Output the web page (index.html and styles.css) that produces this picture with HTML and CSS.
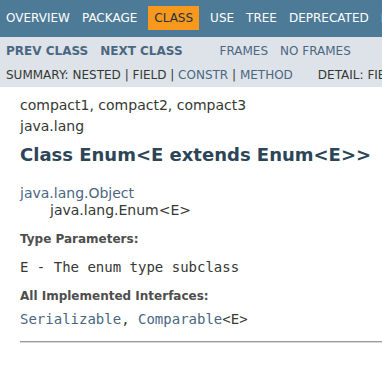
FILE: index.html
```html
<!DOCTYPE html>
<html lang="en">
<head>
  <meta charset="UTF-8">
  <title>Enum (Java Platform SE 8)</title>
  <link rel="stylesheet" href="styles.css">
</head>
<body>
  <div class="topNav">
    <ul class="navList">
      <li><a href="#">Overview</a></li>
      <li><a href="#">Package</a></li>
      <li class="navBarCell1Rev">Class</li>
      <li><a href="#">Use</a></li>
      <li><a href="#">Tree</a></li>
      <li><a href="#">Deprecated</a></li>
      <li><a href="#">Index</a></li>
      <li><a href="#">Help</a></li>
    </ul>
  </div>
  <div class="subNav">
    <div class="subRow">
      <ul class="navList">
        <li><a class="strong" href="#">Prev&nbsp;Class</a></li>
        <li><a class="strong" href="#">Next&nbsp;Class</a></li>
      </ul>
      <ul class="navList">
        <li><a href="#">Frames</a></li>
        <li><a href="#">No&nbsp;Frames</a></li>
      </ul>
    </div>
    <div class="subRow summaryRow">
      <ul class="subNavList">
        <li>Summary:&nbsp;</li>
        <li>Nested&nbsp;|&nbsp;</li>
        <li>Field&nbsp;|&nbsp;</li>
        <li><a href="#">Constr</a>&nbsp;|&nbsp;</li>
        <li><a href="#">Method</a></li>
      </ul>
      <ul class="subNavList">
        <li>Detail:&nbsp;</li>
        <li>Field&nbsp;|&nbsp;</li>
        <li><a href="#">Constr</a>&nbsp;|&nbsp;</li>
        <li><a href="#">Method</a></li>
      </ul>
    </div>
  </div>
  <div class="header">
    <div class="subTitle">compact1, compact2, compact3</div>
    <div class="subTitle">java.lang</div>
    <h2 class="title">Class Enum&lt;E extends Enum&lt;E&gt;&gt;</h2>
  </div>
  <div class="contentContainer">
    <ul class="inheritance">
      <li><a href="#">java.lang.Object</a></li>
      <li>
        <ul class="inheritance">
          <li>java.lang.Enum&lt;E&gt;</li>
        </ul>
      </li>
    </ul>
    <div class="description">
      <dl class="first">
        <dt>Type Parameters:</dt>
        <dd>E - The enum type subclass</dd>
      </dl>
      <dl class="second">
        <dt>All Implemented Interfaces:</dt>
        <dd><a href="#">Serializable</a>, <a href="#">Comparable</a>&lt;E&gt;</dd>
      </dl>
      <hr>
    </div>
  </div>
</body>
</html>
```

FILE: styles.css
```css
body{
  margin: 0;
  background-color: #ffffff;
  color: #353833;
  font-family: 'DejaVu Sans', Arial, Helvetica, sans-serif;
  font-size: 14px;
  overflow: hidden;
}
ul,li{
  list-style: none;
  margin: 0;
  padding: 0;
}
a{
  text-decoration: none;
  color: #4A6782;
}
.topNav{
  box-sizing: border-box;
  height: 37px;
  padding-top: 6px;
  background-color: #4D7A97;
  color: #ffffff;
  font-size: 12px;
  overflow: hidden;
  white-space: nowrap;
}
.topNav a{
  color: #ffffff;
}
.navList{
  display: flex;
  margin-right: 25px;
}
.navList li{
  padding: 5px 6px;
  text-transform: uppercase;
  line-height: 14px;
}
.topNav .navBarCell1Rev{
  margin: 0 5px;
  background-color: #F8981D;
  color: #253441;
}
.subNav{
  background-color: #dee3e9;
  font-size: 12px;
  padding: 2px 0 5px 0;
  white-space: nowrap;
  overflow: hidden;
}
.subRow{
  display: flex;
}
.strong{
  font-weight: bold;
}
.summaryRow{
  padding: 5px 0 0 6px;
  text-transform: uppercase;
  line-height: 14px;
}
.subNavList{
  display: flex;
  margin-right: 25px;
}
.header{
  margin: 0 20px;
  padding-top: 5px;
  white-space: nowrap;
}
.subTitle{
  margin-top: 5px;
}
.title{
  color: #2c4557;
  font-size: 18px;
  margin: 10px 0;
}
.contentContainer{
  padding: 10px 0 10px 20px;
}
.inheritance .inheritance{
  margin-left: 15px;
  padding-left: 15px;
  padding-top: 1px;
}
.description dl{
  margin: 14px 0;
}
.description dt{
  font-size: 12px;
  font-weight: bold;
  color: #4E4E4E;
  margin: 10px 0 0 0;
}
.description dd{
  margin: 5px 0 10px 0;
  font-family: 'DejaVu Sans Mono', monospace;
  font-size: 14px;
}
.description dl.first dd{
  margin-top: 13px;
}
.description dl.second dd{
  margin-top: 8px;
}
hr{
  margin: 0;
  border: 0;
  border-top: 1px solid #9a9a9a;
  border-bottom: 1px solid #d8d8d8;
}
```
